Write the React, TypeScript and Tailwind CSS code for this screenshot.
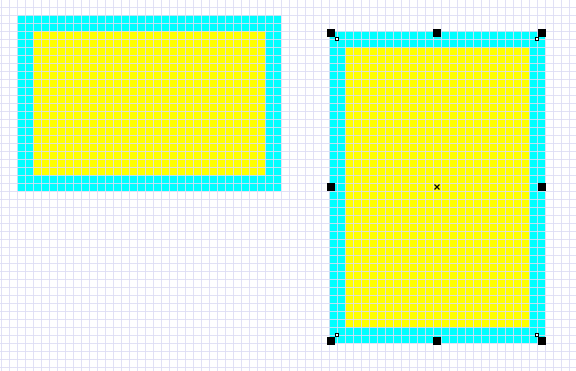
import React from 'react'

// grid overlay is drawn over the shapes, under the selection handles
const GRID =
  'bg-[linear-gradient(to_right,rgba(220,220,244,0.85)_1px,transparent_1px),linear-gradient(to_bottom,rgba(220,220,244,0.85)_1px,transparent_1px)] bg-[size:8px_8px] bg-[position:1px_7px]'

function Handle() {
  return <div className="w-[8px] h-[8px] bg-black" />
}

function Corner() {
  return <div className="w-[4px] h-[4px] border border-black bg-white" />
}

function HandleRow({ middle = true }: { middle?: boolean }) {
  return (
    <div className="flex justify-between">
      <Handle />
      {middle && <Handle />}
      <Handle />
    </div>
  )
}

export default function App() {
  return (
    <div className="relative w-[576px] h-[371px] overflow-hidden bg-white">
      {/* shapes on the canvas */}
      <div className="absolute left-[17px] top-[15px] w-[264px] h-[176px] border-[16px] border-[#00ffff] bg-[#ffff00]" />
      <div className="absolute left-[329px] top-[31px] w-[216px] h-[312px] border-[16px] border-[#00ffff] bg-[#ffff00]" />

      {/* grid */}
      <div className={`absolute inset-0 pointer-events-none ${GRID}`} />

      {/* selection of the right shape */}
      <div className="absolute left-[327px] top-[29px] w-[219px] h-[316px] flex flex-col justify-between">
        <HandleRow />
        <HandleRow middle={false} />
        <HandleRow />
      </div>

      <div className="absolute left-[335px] top-[37px] w-[204px] h-[300px] flex flex-col justify-between">
        <div className="flex justify-between">
          <Corner />
          <Corner />
        </div>
        <div className="flex justify-between">
          <Corner />
          <Corner />
        </div>
      </div>

      {/* center marker */}
      <svg className="absolute left-[434px] top-[184px]" width="6" height="6" viewBox="0 0 6 6">
        <path d="M0.5 0.5 L5.5 5.5 M5.5 0.5 L0.5 5.5" stroke="black" strokeWidth="1.3" />
      </svg>
    </div>
  )
}
